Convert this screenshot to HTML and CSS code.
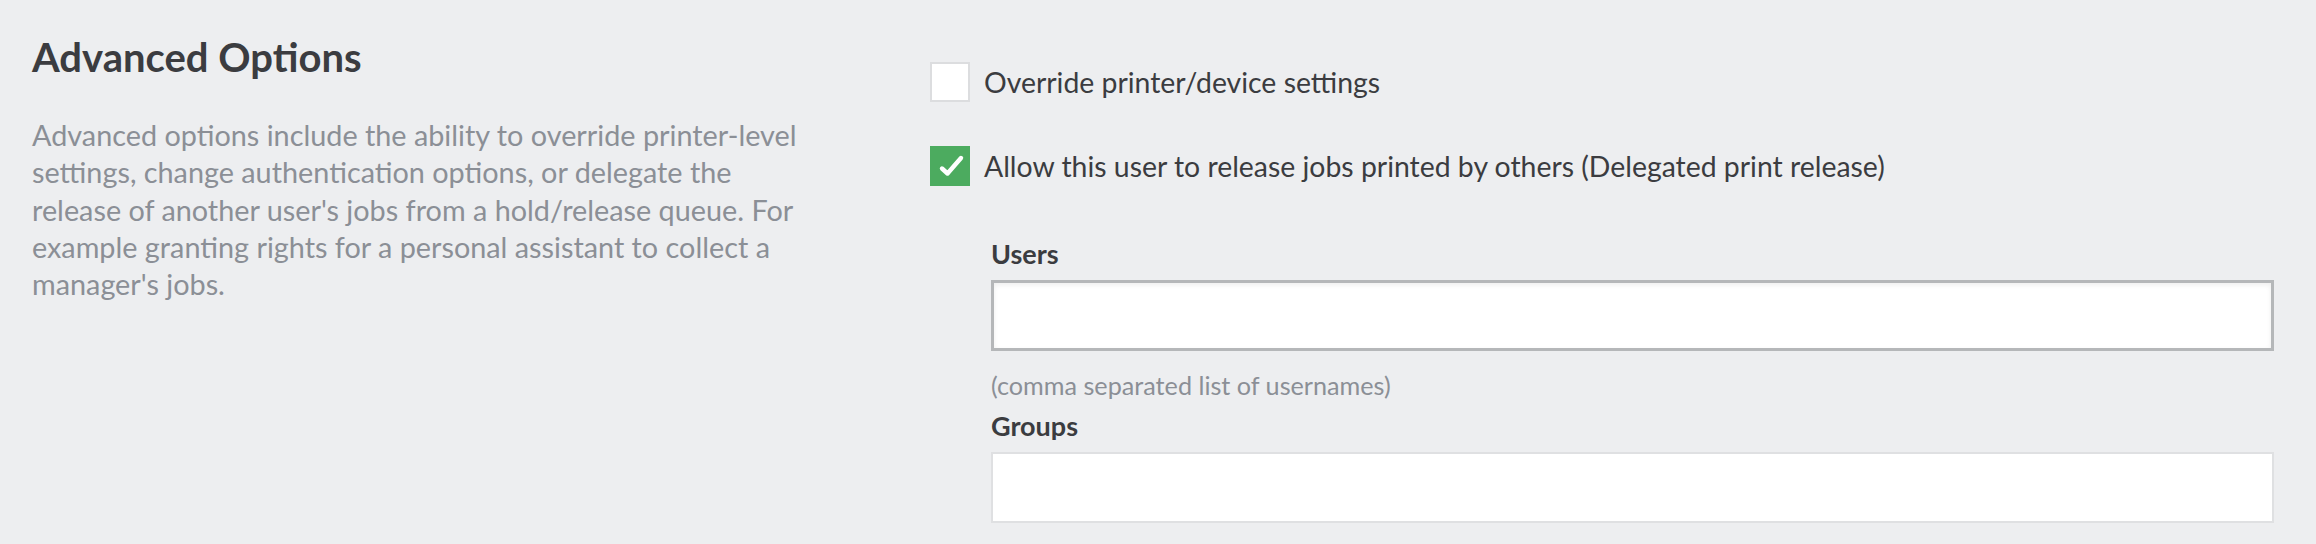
FILE: index.html
```html
<!DOCTYPE html>
<html>
<head>
    <meta charset="UTF-8" />
    <title>Advanced Options</title>
    <link rel="stylesheet" href="styles.css">
</head>
<body>
    <div class="section">
        <div class="intro">
            <h2>Advanced Options</h2>
            <p>Advanced options include the ability to override printer-level settings, change authentication options, or delegate the release of another user's jobs from a hold/release queue. For example granting rights for a personal assistant to collect a manager's jobs.</p>
        </div>
        <div class="options">
            <label class="check">
                <span class="box"></span>
                <span>Override printer/device settings</span>
            </label>
            <label class="check">
                <span class="box checked">
                    <svg width="36" height="36" viewBox="2 2 36 36"><path d="M12 22.5l5.5 5L31 12" fill="none" stroke="#fff" stroke-width="4.4" stroke-linecap="round" stroke-linejoin="round"/></svg>
                </span>
                <span>Allow this user to release jobs printed by others (Delegated print release)</span>
            </label>
            <div class="delegates">
                <label class="field-label" for="users">Users</label>
                <input class="field field-active" id="users" type="text">
                <div class="hint">(comma separated list of usernames)</div>
                <label class="field-label" for="groups">Groups</label>
                <input class="field" id="groups" type="text">
            </div>
        </div>
    </div>
</body>
</html>
```

FILE: styles.css
```css
* {
    margin: 0;
    padding: 0;
    box-sizing: border-box;
}
body {
    background-color: #edeef0;
    font-family: "Source Sans Pro", Lato, "Noto Sans", sans-serif;
    color: #3b3c40;
}
.section {
    display: grid;
    grid-template-columns: 898px 1fr;
    padding: 0 42px 0 32px;
}

/* left column */
.intro h2 {
    margin-top: 32px;
    font-size: 40px;
    line-height: 50px;
    font-weight: 700;
    color: #3b3c40;
}
.intro p {
    margin-top: 35px;
    width: 780px;
    font-size: 28.8px;
    line-height: 37.3px;
    color: #8b8f96;
}

/* right column */
.options {
    padding-top: 62px;
}
.check {
    display: flex;
    align-items: center;
    gap: 14px;
    height: 40px;
    font-size: 28.4px;
    color: #3b3c40;
    margin-bottom: 44px;
}
.box {
    width: 40px;
    height: 40px;
    flex: none;
    background-color: #fff;
    border: 2px solid #dcdddf;
    display: flex;
    align-items: center;
    justify-content: center;
}
.box.checked {
    background-color: #4cab5f;
    border-color: #4cab5f;
}

.delegates {
    padding-left: 61px;
    padding-top: 5px;      /* margin of .check collapses, so use padding */
}
.field-label {
    display: block;
    font-size: 27px;
    line-height: 37px;
    font-weight: 700;
    color: #3b3c40;
    margin-bottom: 8px;
}
.field {
    display: block;
    width: 100%;
    height: 71px;
    background-color: #fff;
    border: 2px solid #dfe0e2;
    outline: none;
    font: inherit;
}
.field-active {
    border: 3px solid #b5b7b9;
    box-shadow: inset 0 2px 5px rgba(0, 0, 0, 0.07);
}
.hint {
    margin: 17px 0 5px;
    font-size: 25.2px;
    line-height: 34px;
    color: #8b8f96;
}
```
